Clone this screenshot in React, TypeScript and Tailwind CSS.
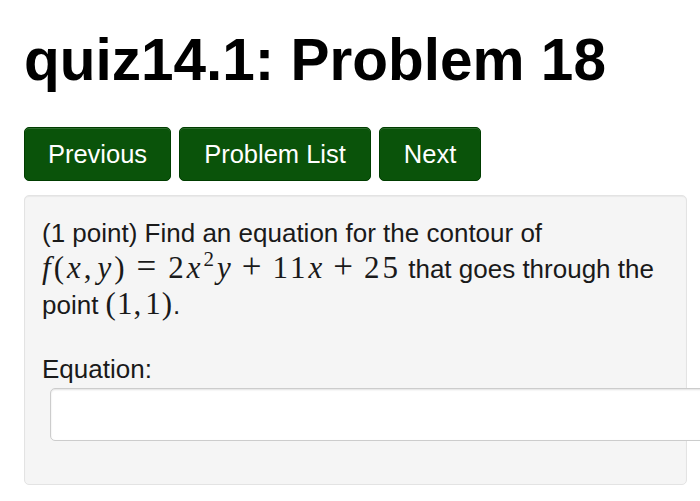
import React from "react";

const M = ({ children, t = "tracking-[3px]" }: { children: React.ReactNode; t?: string }) => (
  <span className={"font-['Liberation_Serif',serif] text-[31px] leading-none " + t}>{children}</span>
);
const I = ({ children }: { children: React.ReactNode }) => <i className="italic">{children}</i>;
const Rel = ({ children }: { children: React.ReactNode }) => (
  <span className="mx-[9px] text-[35px] leading-[0]">{children}</span>
);
const Bin = ({ children }: { children: React.ReactNode }) => (
  <span className="mx-[8px] text-[35px] leading-[0]">{children}</span>
);
const Th = () => <span className="inline-block w-[3px]" />;

export default function App() {
  return (
    <div className="w-[700px] h-[501px] overflow-hidden bg-white font-['Liberation_Sans',Arial,sans-serif] text-black">
      <div className="pl-[24px] pt-[28px]">
        <h1 className="text-[58.5px] font-bold leading-[64px]">quiz14.1: Problem 18</h1>
        <div className="mt-[35px] flex gap-[8px]">
          <button className="h-[54px] w-[147px] rounded-[5px] border border-[#003d00] bg-[#0a530a] text-[25.5px] text-white shadow-[inset_0_1px_0_rgba(255,255,255,0.15)]">
            Previous
          </button>
          <button className="h-[54px] w-[192px] rounded-[5px] border border-[#003d00] bg-[#0a530a] text-[25.5px] text-white shadow-[inset_0_1px_0_rgba(255,255,255,0.15)]">
            Problem List
          </button>
          <button className="h-[54px] w-[102px] rounded-[5px] border border-[#003d00] bg-[#0a530a] text-[25.5px] text-white shadow-[inset_0_1px_0_rgba(255,255,255,0.15)]">
            Next
          </button>
        </div>
        <div className="mt-[14px] h-[290px] w-[663px] rounded-[5px] border border-[#e3e3e3] bg-[#f5f5f5] pl-[17px] pt-[19px] shadow-[inset_0_1px_1px_rgba(0,0,0,0.05)]">
          <p className="text-[26px] leading-[36px] text-[#1a1a1a]">
            (1 point) Find an equation for the contour of
            <br />
            <M>
              <I>f</I>(<I>x</I>,<Th /><I>y</I>)<Rel>=</Rel>2<I>x</I>
              <sup className="text-[21px] relative top-[-12px]">2</sup>
              <I>y</I>
              <Bin>+</Bin>11<I>x</I>
              <Bin>+</Bin>25
            </M>{" "}
            that goes through the
            <br />
            point <M t="tracking-[1px]">(1,<Th />1)</M>.
          </p>
          <p className="mt-[28px] text-[26px] leading-[36px] text-[#1a1a1a]">Equation:</p>
          <input
            type="text"
            className="ml-[8px] mt-[1px] block h-[53px] w-[700px] rounded-[5px] border border-[#cccccc] bg-white shadow-[inset_0_1px_2px_rgba(0,0,0,0.12)] outline-none"
          />
        </div>
      </div>
    </div>
  );
}
